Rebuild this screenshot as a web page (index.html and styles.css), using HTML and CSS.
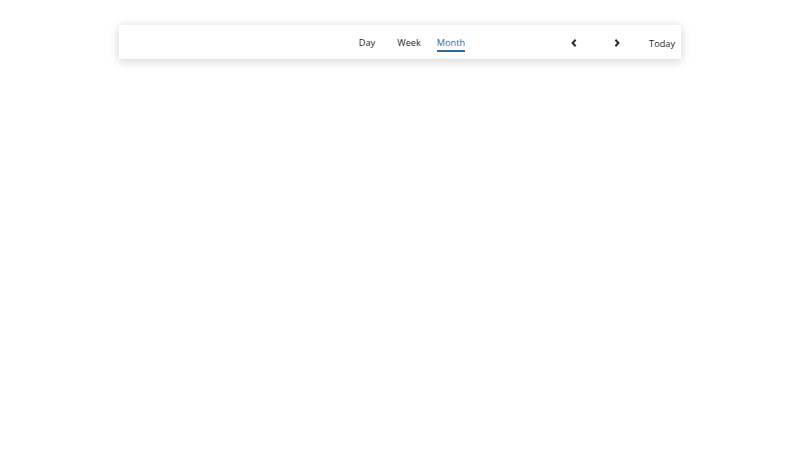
FILE: index.html
```html
<!DOCTYPE html>
<html>
<head>
<meta charset="utf-8">
<link rel="stylesheet" href="styles.css">
</head>
<body>
<div class="toolbar">
  <div class="tabs">
    <span class="tab"><span class="label">Day</span></span>
    <span class="tab"><span class="label">Week</span></span>
    <span class="tab active"><span class="label">Month</span></span>
  </div>
  <div class="spacer"></div>
  <div class="arrows">
    <span class="arrow"><svg width="6" height="8" viewBox="0 0 6 8"><path d="M4.6 0.8 L1.6 4 L4.6 7.2" fill="none" stroke="#2a2a2a" stroke-width="2"/></svg></span>
    <span class="arrow"><svg width="6" height="8" viewBox="0 0 6 8"><path d="M1.4 0.8 L4.4 4 L1.4 7.2" fill="none" stroke="#2a2a2a" stroke-width="2"/></svg></span>
  </div>
  <span class="today">Today</span>
</div>
</body>
</html>
```
FILE: styles.css
```css
html, body {
  margin: 0;
  padding: 0;
  background: #fff;
  height: 100%;
}
body {
  font-family: "Open Sans", "Liberation Sans", sans-serif;
  color: #262626;
  padding-top: 25px;
  box-sizing: border-box;
}
.toolbar {
  width: 562px;
  height: 34px;
  margin-left: 119px;
  background: #fff;
  box-shadow: 0 2px 10px rgba(0, 0, 0, 0.18);
  display: flex;
  align-items: center;
}
.tabs {
  display: flex;
  margin-left: 227px;
  margin-top: 1px;
}
.tab {
  width: 42px;
  display: flex;
  justify-content: center;
  font-size: 9.2px;
  font-weight: 400;
}
.label {
  position: relative;
  line-height: 14px;
}
.tab.active .label {
  color: #2b6da4;
}
.tab.active .label::after {
  content: "";
  position: absolute;
  left: 0;
  right: 0;
  bottom: -2px;
  height: 2px;
  background: #2b6da4;
}
.spacer {
  flex: 1;
}
.arrows {
  display: flex;
}
.arrow {
  width: 43px;
  display: flex;
  justify-content: center;
  align-items: center;
  height: 14px;
}
.arrow svg {
  display: block;
  margin-top: 2px;
}
.today {
  font-size: 9.2px;
  font-weight: 400;
  padding: 2px 6px 0 6px;
  margin-left: 5px;
}
```
